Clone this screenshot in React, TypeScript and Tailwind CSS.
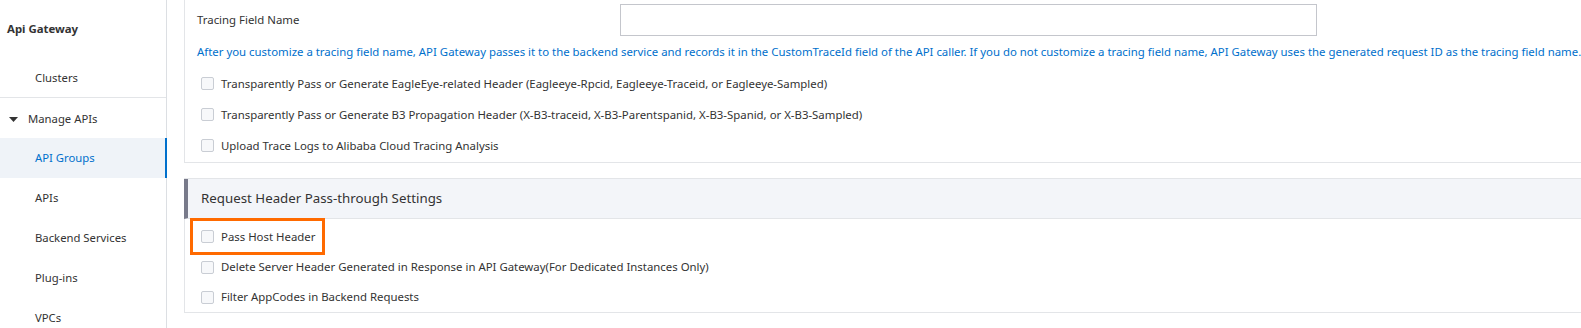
import React from 'react';

const font = { fontFamily: '"Segoe UI", "Noto Sans", "Open Sans", sans-serif' };

function Checkbox() {
    return <span className="inline-block w-[13px] h-[13px] rounded-[2px] border border-[#c9cdd4] bg-[#f7f8fa] flex-shrink-0" />;
}

function CheckRow({ label, h = 'h-[31px]' }: { label: string; h?: string }) {
    return (
        <div className={`flex items-center ${h} pl-[16px] gap-[7px]`}>
            <Checkbox />
            <span className="text-[11.4px] text-[#333]">{label}</span>
        </div>
    );
}

const sideItems = ['APIs', 'Backend Services', 'Plug-ins', 'VPCs'];

function Sidebar() {
    return (
        <aside className="w-[167px] flex-shrink-0 border-r border-[#dcdfe3] bg-white h-[328px]">
            <div className="h-[57px] flex items-center pl-[7px] text-[11.4px] font-bold text-[#333]">Api Gateway</div>
            <div className="h-[41px] flex items-center pl-[35px] pt-[2px] text-[11.3px] text-[#333] border-b border-[#e3e5e8]">Clusters</div>
            <div className="h-[40px] flex items-center pl-[9px] pt-[3px] text-[11.3px] text-[#333] gap-[10px]">
                <svg width="9" height="5" viewBox="0 0 9 5"><path d="M0 0h9L4.5 5z" fill="#333" /></svg>
                <span>Manage APIs</span>
            </div>
            <div className="h-[40px] flex items-center pl-[35px] pt-[1px] text-[11.3px] text-[#0070cc] bg-[#eff3f8] border-r-2 border-[#0070cc] -mr-px">API Groups</div>
            {sideItems.map((s) => (
                <div key={s} className="h-[40px] flex items-center pl-[35px] pt-[1px] text-[11.3px] text-[#333]">{s}</div>
            ))}
        </aside>
    );
}

export default function App() {
    return (
        <div className="flex w-[1581px] h-[328px] overflow-hidden bg-white" style={font}>
            <Sidebar />
            <main className="flex-1 pl-[17px]">
                <section className="border-l border-b border-[#e3e5e8]">
                    <div className="flex items-center h-[40px] pl-[12px]">
                        <span className="w-[423px] flex-shrink-0 text-[11.4px] text-[#333]">Tracing Field Name</span>
                        <div className="w-[697px] flex-shrink-0 h-[32px] border border-[#c4c6cc] bg-white" />
                    </div>
                    <p className="mt-[3px] pl-[12px] text-[11.4px] leading-[18px] text-[#0070cc] whitespace-nowrap">
                        After you customize a tracing field name, API Gateway passes it to the backend service and records it in the CustomTraceId field of the API caller. If you do not customize a tracing field name, API Gateway uses the generated request ID as the tracing field name.
                    </p>
                    <div className="mt-[7px] pb-[1px]">
                        <CheckRow label="Transparently Pass or Generate EagleEye-related Header (Eagleeye-Rpcid, Eagleeye-Traceid, or Eagleeye-Sampled)" />
                        <CheckRow label="Transparently Pass or Generate B3 Propagation Header (X-B3-traceid, X-B3-Parentspanid, X-B3-Spanid, or X-B3-Sampled)" />
                        <CheckRow label="Upload Trace Logs to Alibaba Cloud Tracing Analysis" />
                    </div>
                </section>
                <section className="relative mt-[15px] border-l border-t border-b border-[#e3e5e8]">
                    <div className="h-[40px] -ml-px flex items-center pl-[13px] bg-[#f3f5f9] border-l-4 border-[#787a8a] border-b border-b-[#e3e5e8] text-[13.3px] text-[#333]">
                        Request Header Pass-through Settings
                    </div>
                    <div className="pt-[2px]">
                        <CheckRow label="Pass Host Header" h="h-[31px]" />
                        <CheckRow label="Delete Server Header Generated in Response in API Gateway(For Dedicated Instances Only)" h="h-[30px]" />
                        <CheckRow label="Filter AppCodes in Backend Requests" h="h-[30px]" />
                    </div>
                    <div className="absolute left-[5px] top-[39px] w-[135px] h-[37px] border-[3px] border-[#ff6a00] pointer-events-none" />
                </section>
            </main>
        </div>
    );
}
